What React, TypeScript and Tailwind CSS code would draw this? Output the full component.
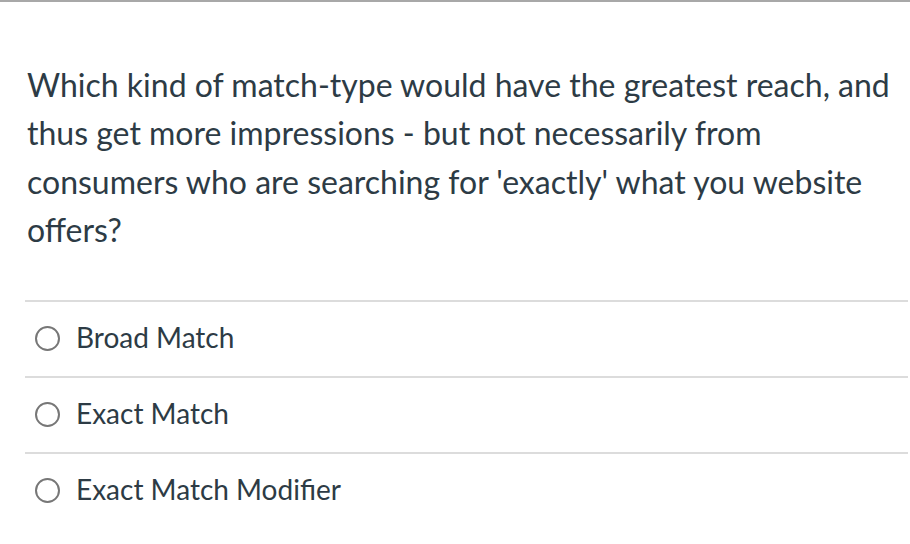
const options = ["Broad Match", "Exact Match", "Exact Match Modifier"];

export default function App() {
  return (
    <div className="min-h-[544px] w-[910px] bg-white border-t-2 border-[#a8a8a8] font-['Lato',sans-serif] text-[#2d3b45]">
      <div className="pl-[25px] pr-[2px]">
        {/* question */}
        <p className="pt-[59px] pl-[2px] pr-4 text-[32px] leading-[48.4px]">
          Which kind of match-type would have the greatest reach, and thus get more impressions - but not necessarily from
          consumers who are searching for 'exactly' what you website offers?
        </p>

        {/* answers */}
        <div className="mt-[45px]">
          {options.map((opt) => (
            <label key={opt} className="flex items-center h-[76px] border-t-2 border-[#dcdcdc] cursor-pointer">
              <span className="ml-[10px] w-[25px] h-[25px] rounded-full border-2 border-[#777777] bg-white shrink-0" />
              <span className="ml-[16px] pb-[4px] text-[28px]">{opt}</span>
            </label>
          ))}
        </div>
      </div>
    </div>
  );
}
